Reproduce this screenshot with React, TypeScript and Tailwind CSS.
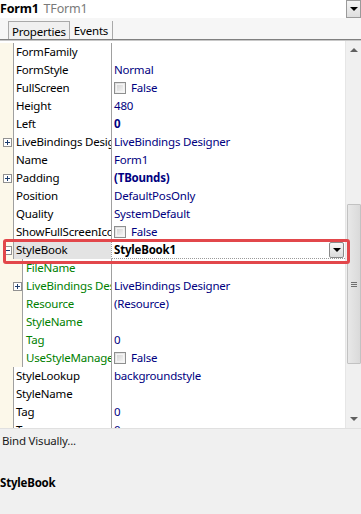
import React from "react";

type Row = {
  name: string;
  value?: string;
  kind?: "text" | "bold" | "check" | "black";
  expand?: "+" | "-";
  nested?: boolean;
  selected?: boolean;
};

const rows: Row[] = [
  { name: "FormFamily" },
  { name: "FormStyle", value: "Normal" },
  { name: "FullScreen", value: "False", kind: "check" },
  { name: "Height", value: "480" },
  { name: "Left", value: "0", kind: "bold" },
  { name: "LiveBindings Designer", value: "LiveBindings Designer", expand: "+" },
  { name: "Name", value: "Form1" },
  { name: "Padding", value: "(TBounds)", kind: "bold", expand: "+" },
  { name: "Position", value: "DefaultPosOnly" },
  { name: "Quality", value: "SystemDefault" },
  { name: "ShowFullScreenIcon", value: "False", kind: "check" },
  { name: "StyleBook", value: "StyleBook1", kind: "black", expand: "-", selected: true },
  { name: "FileName", nested: true },
  { name: "LiveBindings Designer", value: "LiveBindings Designer", nested: true, expand: "+" },
  { name: "Resource", value: "(Resource)", nested: true },
  { name: "StyleName", nested: true },
  { name: "Tag", value: "0", nested: true },
  { name: "UseStyleManager", value: "False", kind: "check", nested: true },
  { name: "StyleLookup", value: "backgroundstyle" },
  { name: "StyleName" },
  { name: "Tag", value: "0" },
  { name: "Top", value: "0" },
];

function Box({ sign }: { sign: "+" | "-" }) {
  return (
    <div className="w-[9px] h-[9px] border border-[#919191] bg-white flex items-center justify-center relative">
      <div className="absolute w-[5px] h-px bg-[#1e3e6e] top-[3px] left-[1px]" />
      {sign === "+" && <div className="absolute w-px h-[5px] bg-[#1e3e6e] left-[3px] top-[1px]" />}
    </div>
  );
}

function Check() {
  return (
    <div className="w-[12px] h-[12px] border border-[#8e8f8f] bg-gradient-to-br from-[#dcdcdc] to-[#f8f8f8] mr-[5px] shrink-0 p-px">
      <div className="w-full h-full border border-[#f4f4f4] bg-gradient-to-br from-[#d6d6d6] to-[#f2f2f2]" />
    </div>
  );
}

function PropRow({ r }: { r: Row }) {
  const gutterW = r.nested ? "w-[23px]" : "w-[13px]";
  return (
    <div className="flex h-[18px] shrink-0">
      <div
        className={`${gutterW} shrink-0 bg-[#fcf8ea] flex items-center ${r.nested ? "pl-[13px] border-r border-[#a0a0a0]" : "pl-[3px]"}`}
      >
        {r.expand && <Box sign={r.expand} />}
      </div>
      <div
        className={`${r.nested ? "w-[88px] pl-[3px]" : "w-[98px] pl-[2px] border-l border-[#a0a0a0]"} shrink-0 overflow-hidden whitespace-nowrap flex items-center ${
          r.nested ? "text-[#008000]" : "text-black"
        } ${r.selected ? "bg-[#e3e3e3]" : ""}`}
      >
        {r.name}
      </div>
      <div
        className={`flex-1 min-w-0 border-l border-[#a0a0a0] pl-[2px] flex items-center whitespace-nowrap overflow-hidden ${
          r.selected ? "border-b border-dotted border-b-[#9a9a9a] pr-[1px]" : ""
        }`}
      >
        {r.kind === "check" && <Check />}
        {r.value && (
          <span
            className={
              r.kind === "bold"
                ? "font-bold text-[#000080]"
                : r.kind === "black"
                ? "font-bold text-black"
                : "text-[#000080]"
            }
          >
            {r.value}
          </span>
        )}
        {r.selected && (
          <div className="ml-auto w-[15px] h-[16px] border border-[#8a8a8a] rounded-[2px] bg-gradient-to-b from-[#f6f6f6] to-[#dcdcdc] flex items-center justify-center">
            <div className="w-0 h-0 border-l-[4px] border-r-[4px] border-t-[4px] border-l-transparent border-r-transparent border-t-black" />
          </div>
        )}
      </div>
    </div>
  );
}

export default function App() {
  return (
    <div
      className="w-[361px] h-[514px] bg-[#f0f0f0] flex flex-col overflow-hidden relative text-[11.5px] tracking-[-0.2px]"
      style={{ fontFamily: '"Noto Sans", "Open Sans", sans-serif' }}
    >
      {/* header */}
      <div className="h-[18px] bg-white flex items-center shrink-0">
        <span className="font-bold text-black text-[12.5px] leading-none">Form1</span>
        <span className="ml-[5px] text-[#7a7a7a] text-[12.5px] leading-none">TForm1</span>
        <div className="ml-auto self-start w-[15px] h-[18px] border border-[#9a9a9a] bg-gradient-to-b from-[#f4f4f4] to-[#dedede] flex items-center justify-center">
          <div className="w-0 h-0 border-l-[4px] border-r-[4px] border-t-[4px] border-l-transparent border-r-transparent border-t-black" />
        </div>
      </div>
      {/* tabs */}
      <div className="h-[22px] shrink-0 bg-[#f6f6f6] flex items-end pl-[8px] border-b border-[#808080]">
        <div className="h-[18px] border-l border-t border-r border-[#a9a9a9] bg-[#f0f0f0] px-[3px] pt-[2px] flex items-center text-black">
          Properties
        </div>
        <div className="h-[18px] border-r border-[#a9a9a9] px-[4px] pt-[2px] flex items-center text-black">Events</div>
      </div>
      {/* grid */}
      <div className="h-[388px] shrink-0 flex bg-white border-t border-[#c8c8c8]">
        <div className="flex-1 flex flex-col overflow-hidden pt-[2px]">
          {rows.map((r, i) => (
            <PropRow key={i} r={r} />
          ))}
        </div>
        {/* scrollbar */}
        <div className="w-[16px] shrink-0 bg-[#f0f0f0] border-l border-[#e6e6e6] flex flex-col items-center">
          <div className="h-[18px] flex items-center justify-center">
            <div className="w-0 h-0 border-l-[4px] border-r-[4px] border-b-[4px] border-l-transparent border-r-transparent border-b-[#606060]" />
          </div>
          <div className="h-[145px] shrink-0" />
          <div className="w-[14px] h-[160px] shrink-0 border border-[#c2c2c2] rounded-[1px] bg-gradient-to-r from-[#e8e8e8] to-[#dadada] flex items-center justify-center">
            <div className="flex flex-col gap-[1px]">
              <div className="w-[6px] h-px bg-[#707070]" />
              <div className="w-[6px] h-px bg-[#707070]" />
              <div className="w-[6px] h-px bg-[#707070]" />
            </div>
          </div>
          <div className="flex-1" />
          <div className="h-[18px] flex items-center justify-center">
            <div className="w-0 h-0 border-l-[4px] border-r-[4px] border-t-[4px] border-l-transparent border-r-transparent border-t-[#606060]" />
          </div>
        </div>
      </div>
      {/* bottom panel */}
      <div className="flex-1 bg-[#f0f0f0] border-t border-[#e0e0e0] relative">
        <div className="pl-[2px] pt-[3px] text-[#1a1a1a]">Bind Visually...</div>
        <div className="pt-[25px] font-bold text-black">StyleBook</div>
      </div>
      {/* red highlight annotation */}
      <div className="absolute left-[3px] top-[239px] w-[347px] h-[25px] border-[3px] border-[#e2474b] rounded-[3px] pointer-events-none" />
    </div>
  );
}
